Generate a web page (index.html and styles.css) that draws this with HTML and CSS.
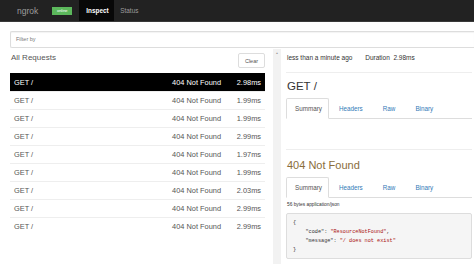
FILE: index.html
```html
<!DOCTYPE html>
<html lang="en">
<head>
    <meta charset="UTF-8">
    <meta name="viewport" content="width=device-width, initial-scale=1.0">
    <title>ngrok - Inspect</title>
    <link rel="stylesheet" href="styles.css">
</head>
<body>
<nav class="navbar">
    <span class="brand">ngrok</span>
    <span class="badge">online</span>
    <a class="nav-link active">Inspect</a>
    <a class="nav-link">Status</a>
</nav>

<div class="page">
    <div class="filter">Filter by</div>

    <div class="main">
        <div class="requests">
            <div class="requests-head">
                <h3>All Requests</h3>
                <button class="clear-btn">Clear</button>
            </div>
            <table class="req-table">
                <tr class="selected"><td>GET /</td><td class="status">404 Not Found</td><td class="dur">2.98ms</td></tr>
                <tr><td>GET /</td><td class="status">404 Not Found</td><td class="dur">1.99ms</td></tr>
                <tr><td>GET /</td><td class="status">404 Not Found</td><td class="dur">1.99ms</td></tr>
                <tr><td>GET /</td><td class="status">404 Not Found</td><td class="dur">2.99ms</td></tr>
                <tr><td>GET /</td><td class="status">404 Not Found</td><td class="dur">1.97ms</td></tr>
                <tr><td>GET /</td><td class="status">404 Not Found</td><td class="dur">1.99ms</td></tr>
                <tr><td>GET /</td><td class="status">404 Not Found</td><td class="dur">2.03ms</td></tr>
                <tr><td>GET /</td><td class="status">404 Not Found</td><td class="dur">2.99ms</td></tr>
                <tr><td>GET /</td><td class="status">404 Not Found</td><td class="dur">2.99ms</td></tr>
            </table>
        </div>

        <div class="scroll-strip"><span class="arrow">&#9650;</span></div>

        <div class="detail">
            <div class="meta">
                <span>less than a minute ago</span>
                <span class="duration">Duration&nbsp; 2.98ms</span>
            </div>
            <h2>GET /</h2>
            <ul class="tabs">
                <li class="active">Summary</li>
                <li>Headers</li>
                <li>Raw</li>
                <li>Binary</li>
            </ul>
            <div class="tab-body"></div>

            <h2 class="resp-status">404 Not Found</h2>
            <ul class="tabs">
                <li class="active">Summary</li>
                <li>Headers</li>
                <li>Raw</li>
                <li>Binary</li>
            </ul>
            <div class="content-type">56 bytes application/json</div>
            <pre class="code">{
    <span class="key">"code"</span>: <span class="str">"ResourceNotFound"</span>,
    <span class="key">"message"</span>: <span class="str">"/ does not exist"</span>
}</pre>
        </div>
    </div>
</div>
</body>
</html>
```

FILE: styles.css
```css
body {
    font-family: "Liberation Sans", Arial, sans-serif;
    margin: 0;
    background: white;
    color: #333;
    overflow: hidden;
    height: 264px;
}
.navbar {
    display: flex;
    align-items: center;
    height: 21px;
    background: #222;
    border-bottom: 1px solid #3a3a3a;
    padding-left: 17px;
}
.brand {
    color: #9d9d9d;
    font-size: 8.5px;
    margin-right: 14px;
}
.badge {
    background: #5cb85c;
    color: white;
    font-size: 4px;
    padding: 1px 4px;
    height: 6px;
    line-height: 6px;
    width: 12px;
    text-align: center;
    margin-right: 7px;
}
.nav-link {
    color: #9d9d9d;
    font-size: 6.4px;
    height: 21px;
    line-height: 21px;
    padding: 0 6px;
}
.nav-link.active {
    background: #080808;
    color: white;
    font-weight: bold;
    width: 22px;
    padding: 0 6px 0 7px;
}
.page {
    padding: 9px 0 0 10px;
}
.filter {
    height: 15px;
    line-height: 15px;
    border: 1px solid #ddd;
    border-right: none;
    border-radius: 2px 0 0 2px;
    padding-left: 5px;
    font-size: 5.5px;
    color: #777;
    box-shadow: inset 0 1px 1px rgba(0, 0, 0, 0.05);
}
.main {
    display: flex;
}
.requests {
    width: 255px;
}
.requests-head {
    display: flex;
    justify-content: space-between;
    align-items: flex-start;
    height: 25px;
}
.requests-head h3 {
    margin: 5px 0 0 1px;
    font-weight: normal;
    font-size: 8px;
    color: #555;
}
.clear-btn {
    font-family: inherit;
    font-size: 5.5px;
    color: #555;
    background: white;
    border: 1px solid #ddd;
    border-radius: 2px;
    height: 15px;
    width: 27px;
    padding: 0;
    margin-top: 5px;
}
.req-table {
    width: 100%;
    border-collapse: collapse;
    font-size: 7.4px;
    color: #555;
}
.req-table td {
    height: 17px;
    padding: 0 4px;
    border-top: 1px solid #eee;
}
.req-table tr.selected td {
    background: #000;
    color: white;
    border-top-color: #000;
}
.req-table .status {
    text-align: right;
    width: 60px;
}
.req-table .dur {
    text-align: right;
    width: 32px;
}
.scroll-strip {
    width: 8px;
    margin: 1px 5px 0 8px;
    height: 220px;
    background: #f2f2f2;
    text-align: center;
}
.arrow {
    display: block;
    font-size: 3px;
    color: #999;
    margin-top: 2px;
}
.detail {
    width: 186px;
    padding-top: 5px;
}
.meta {
    font-size: 6.5px;
    color: #333;
    padding: 1px 0 0 1px;
    height: 18px;
    border-bottom: 1px solid #eee;
}
.meta .duration {
    margin-left: 11px;
}
.detail h2 {
    margin: 0;
    font-weight: normal;
    font-size: 11.5px;
    color: #333;
    padding: 7px 0 0 1px;
    height: 18px;
}
.tabs {
    display: flex;
    list-style: none;
    margin: 0;
    padding: 0;
    border-bottom: 1px solid #ddd;
    font-size: 6.3px;
}
.tabs li {
    color: #337ab7;
    height: 19px;
    line-height: 19px;
    padding: 0 9px;
    margin-bottom: -1px;
    border: 1px solid transparent;
    border-radius: 2px 2px 0 0;
}
.tabs li.active {
    color: #555;
    border-color: #ddd;
    border-bottom-color: white;
    background: white;
    padding: 0 6px 0 8px;
}
.tab-body {
    height: 30px;
    border-bottom: 1px solid #eee;
}
.detail h2.resp-status {
    color: #8a6d3b;
    font-size: 11px;
    padding-top: 9px;
}
.content-type {
    font-size: 4.8px;
    color: #333;
    padding: 4px 0 0 1px;
    height: 11px;
}
.code {
    margin: 0;
    background: #f5f5f5;
    border: 1px solid #ddd;
    border-radius: 2px;
    font-family: "Liberation Mono", "Courier New", monospace;
    font-size: 5.2px;
    line-height: 9px;
    color: #333;
    padding: 5px 6px;
    height: 34px;
}
.code .key {
    color: #333;
}
.code .str {
    color: #a11;
}
```
